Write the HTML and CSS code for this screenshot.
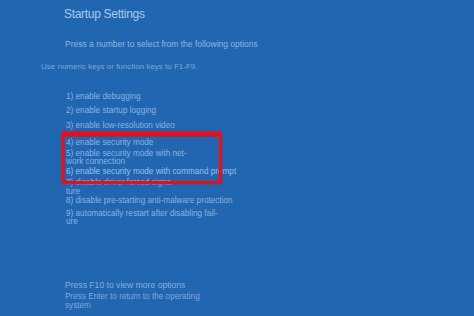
FILE: index.html
```html
<!DOCTYPE html>
<html>
<head>
    <meta name="viewport" content="width=device-width, initial-scale=1">
    <link rel="stylesheet" href="styles.css">
</head>

<body>
    <div class="screen">
        <h1 class="title">Startup Settings</h1>
        <p class="lead">Press a number to select from the following options</p>
        <p class="hint">Use numeric keys or function keys to F1-F9.</p>

        <ul class="opts">
            <li>1) enable debugging</li>
            <li class="sp">2) enable startup logging</li>
            <li class="sp">3) enable low-resolution video</li>
            <li class="sp2">4) enable security mode</li>
            <li class="near">5) enable security mode with net-<br>work connection</li>
            <li class="tight bright">6) enable security mode with command prompt</li>
            <li class="near">7) disable driver forced signa-<br>ture</li>
            <li class="tight">8) disable pre-starting anti-malware protection</li>
            <li class="far">9) automatically restart after disabling fail-<br>ure</li>
        </ul>

        <p class="more">Press F10 to view more options</p>
        <p class="back">Press Enter to return to the operating<br>system</p>

        <div class="mark"></div>
    </div>
</body>
</html>
```

FILE: styles.css
```css
html, body {
    margin: 0;
    padding: 0;
    height: 100%;
    background: #2066b0;
}

.screen {
    position: relative;
    height: 316px;
    padding: 6px 0 0 41px;
    box-sizing: border-box;
    font-family: "Liberation Sans", Arial, sans-serif;
    color: #8cb3e2;
}

.screen p, .screen h1, .screen ul {
    margin: 0;
}

.title {
    margin-left: 23px !important;
    font-size: 12px;
    font-weight: normal;
    line-height: 16px;
    letter-spacing: -0.3px;
    color: #abcaf0;
}

.lead {
    margin: 17px 0 0 24px !important;
    font-size: 8.5px;
    line-height: 10px;
    color: #90b5e3;
}

.hint {
    margin-top: 13px !important;
    font-size: 8px;
    line-height: 10px;
    color: #7ea6d6;
}

.opts {
    list-style: none;
    padding: 0;
    margin: 21px 0 0 25px !important;
    font-size: 8.2px;
    line-height: 8.6px;
}

.opts li.sp {
    margin-top: 5.8px;
}

.opts li.sp2 {
    margin-top: 8.2px;
}

.opts li.near {
    margin-top: 2.6px;
}

.opts li.tight {
    margin-top: 0.8px;
}

.opts li.far {
    margin-top: 4px;
}

.opts li.bright {
    color: #9cc0ea;
}

.more {
    margin: 53px 0 0 24px !important;
    font-size: 8.6px;
    line-height: 10px;
    color: #88aedc;
}

.back {
    margin: 2px 0 0 24px !important;
    font-size: 8.2px;
    line-height: 9.2px;
    color: #82a9d9;
}

.mark {
    position: absolute;
    left: 62px;
    top: 132px;
    width: 154px;
    height: 44px;
    border: 3.5px solid #e2121c;
    border-top-width: 5px;
    box-shadow: 0 0 2px #e2121c;
}
```
